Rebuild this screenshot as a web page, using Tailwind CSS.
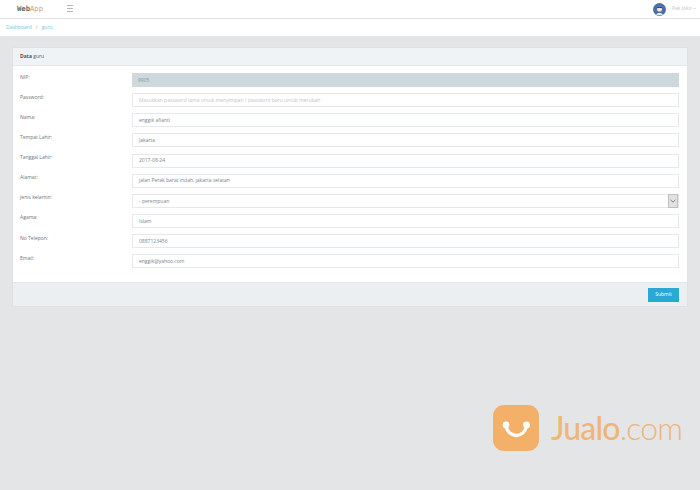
<!DOCTYPE html>
<html lang="en">
<head>
    <meta charset="UTF-8">
    <title>WebApp</title>
    <script src="https://cdn.jsdelivr.net/npm/@tailwindcss/browser@4"></script>
</head>
<body class="w-[700px] h-[490px] overflow-hidden bg-[#e4e5e6] font-['Open_Sans',sans-serif] relative">

    <!-- Header -->
    <header class="h-[19px] bg-white border-b border-[#dfe2e4] flex items-center justify-between">
        <div class="flex items-center">
            <span class="ml-[17px] w-[50px] font-['DejaVu_Sans_Mono',monospace] font-bold text-[7.2px] text-[#6a6a6a]">Web<span class="font-normal text-[#d99c70]">App</span></span>
            <div class="w-[6px] flex flex-col gap-[2px]">
                <div class="h-px bg-[#b4b9bb]"></div>
                <div class="h-px bg-[#b4b9bb]"></div>
                <div class="h-px bg-[#b4b9bb]"></div>
            </div>
        </div>
        <div class="flex items-center">
            <svg class="w-[13px] h-[13px]" viewBox="0 0 13 13">
                <circle cx="6.5" cy="6.5" r="6.5" fill="#4a6fa8"/>
                <circle cx="6.5" cy="6" r="2.6" fill="#f3e2dc"/>
                <path d="M3.6 5.4C3.6 3.2 9.4 3.2 9.4 5.4C8 4.6 5 4.6 3.6 5.4Z" fill="#1d2a4a"/>
                <path d="M3 11.5C4 9.4 9 9.4 10 11.5C8.5 12.6 4.5 12.6 3 11.5Z" fill="#e8edf5"/>
            </svg>
            <span class="ml-[6px] w-[28px] text-[5px] text-[#c0c4c7] whitespace-nowrap">Pak Joko ~</span>
        </div>
    </header>

    <!-- Breadcrumb -->
    <div class="h-[18px] pt-[1px] bg-white border-b border-[#e2e5e7] pl-[6px] flex items-center text-[5px]">
        <span class="text-[#7cc3d9]">Dashboard</span>
        <span class="mx-[4px] text-[#a8aeb2]">/</span>
        <span class="text-[#7cc3d9]">guru</span>
    </div>

    <!-- Card -->
    <div class="mx-[12px] mt-[10px] h-[260px] flex flex-col bg-white border border-[#dfe2e4]">
        <div class="h-[18px] pl-[7px] bg-[#f0f3f5] border-b border-[#e6e9eb] flex items-center text-[5px] text-[#4c5458]">
            <b>Data</b>&nbsp;guru
        </div>

        <form class="flex-1 pt-[7px] pl-[7px] pr-[8px] flex flex-col gap-[6.14px] text-[5px] text-[#7a858d]">
            <div class="flex h-[14px]">
                <label class="w-[112px] pt-[0.5px] text-[#6b757c]">NIP:</label>
                <div class="flex-1 bg-[#cfd8dd] pl-[6px] pt-[1px] flex items-center text-[#8a959c]">9905</div>
            </div>
            <div class="flex h-[14px]">
                <label class="w-[112px] pt-[0.5px] text-[#6b757c]">Password:</label>
                <div class="flex-1 border border-[#e6e9eb] pl-[6px] pt-[1px] flex items-center text-[#c0c5c8]">Masukkan password lama untuk menyimpan / password baru untuk merubah</div>
            </div>
            <div class="flex h-[14px]">
                <label class="w-[112px] pt-[0.5px] text-[#6b757c]">Nama:</label>
                <div class="flex-1 border border-[#e6e9eb] pl-[6px] pt-[1px] flex items-center">enggik afianti</div>
            </div>
            <div class="flex h-[14px]">
                <label class="w-[112px] pt-[0.5px] text-[#6b757c]">Tempat Lahir:</label>
                <div class="flex-1 border border-[#e6e9eb] pl-[6px] pt-[1px] flex items-center">Jakarta</div>
            </div>
            <div class="flex h-[14px]">
                <label class="w-[112px] pt-[0.5px] text-[#6b757c]">Tanggal Lahir:</label>
                <div class="flex-1 border border-[#e6e9eb] pl-[6px] pt-[1px] flex items-center">2017-08-24</div>
            </div>
            <div class="flex h-[14px]">
                <label class="w-[112px] pt-[0.5px] text-[#6b757c]">Alamat:</label>
                <div class="flex-1 border border-[#e6e9eb] pl-[6px] pt-[1px] flex items-center">jalan Perak barat indah, jakarta selatan</div>
            </div>
            <div class="flex h-[14px]">
                <label class="w-[112px] pt-[0.5px] text-[#6b757c]">Jenis kelamin:</label>
                <div class="flex-1 border border-[#e6e9eb] pl-[6px] flex items-center justify-between">
                    <span class="pt-[1px]">- perempuan</span>
                    <span class="w-[10px] h-[14px] bg-[#e2e2e2] border border-[#c0c0c0] flex items-center justify-center">
                        <svg class="w-[6px] h-[4px]" viewBox="0 0 6 4"><path d="M0.5 0.8L3 3.2L5.5 0.8" fill="none" stroke="#777" stroke-width="0.9"/></svg>
                    </span>
                </div>
            </div>
            <div class="flex h-[14px]">
                <label class="w-[112px] pt-[0.5px] text-[#6b757c]">Agama:</label>
                <div class="flex-1 border border-[#e6e9eb] pl-[6px] pt-[1px] flex items-center">Islam</div>
            </div>
            <div class="flex h-[14px]">
                <label class="w-[112px] pt-[0.5px] text-[#6b757c]">No Telepon:</label>
                <div class="flex-1 border border-[#e6e9eb] pl-[6px] pt-[1px] flex items-center">0887123456</div>
            </div>
            <div class="flex h-[14px]">
                <label class="w-[112px] pt-[0.5px] text-[#6b757c]">Email:</label>
                <div class="flex-1 border border-[#e6e9eb] pl-[6px] pt-[1px] flex items-center">enggik@yahoo.com</div>
            </div>
        </form>

        <div class="h-[24px] bg-[#eceff1] border-t border-[#e4e7e9] pr-[8px] flex items-center justify-end">
            <div class="w-[31px] h-[14px] bg-[#2aa9d6] text-white text-[5px] flex items-center justify-center">Submit</div>
        </div>
    </div>

    <!-- Watermark -->
    <div class="absolute left-[493px] top-[405px] flex items-center">
        <svg class="w-[46px] h-[46px]" viewBox="0 0 46 46">
            <rect width="46" height="46" rx="11" fill="#f2b069"/>
            <path d="M13 21C15.5 33.5 31 33.5 33.5 21" fill="none" stroke="#fff" stroke-width="3.5" stroke-linecap="round"/>
            <circle cx="13" cy="20" r="3.4" fill="#fff"/>
            <circle cx="33.5" cy="20" r="3.4" fill="#fff"/>
        </svg>
        <span class="ml-[12px] font-['Lato',sans-serif] text-[32px] leading-none tracking-[-0.85px] text-[#eeb679] whitespace-nowrap"><span class="font-medium">Jualo</span><span class="font-light">.com</span></span>
    </div>
</body>
</html>
